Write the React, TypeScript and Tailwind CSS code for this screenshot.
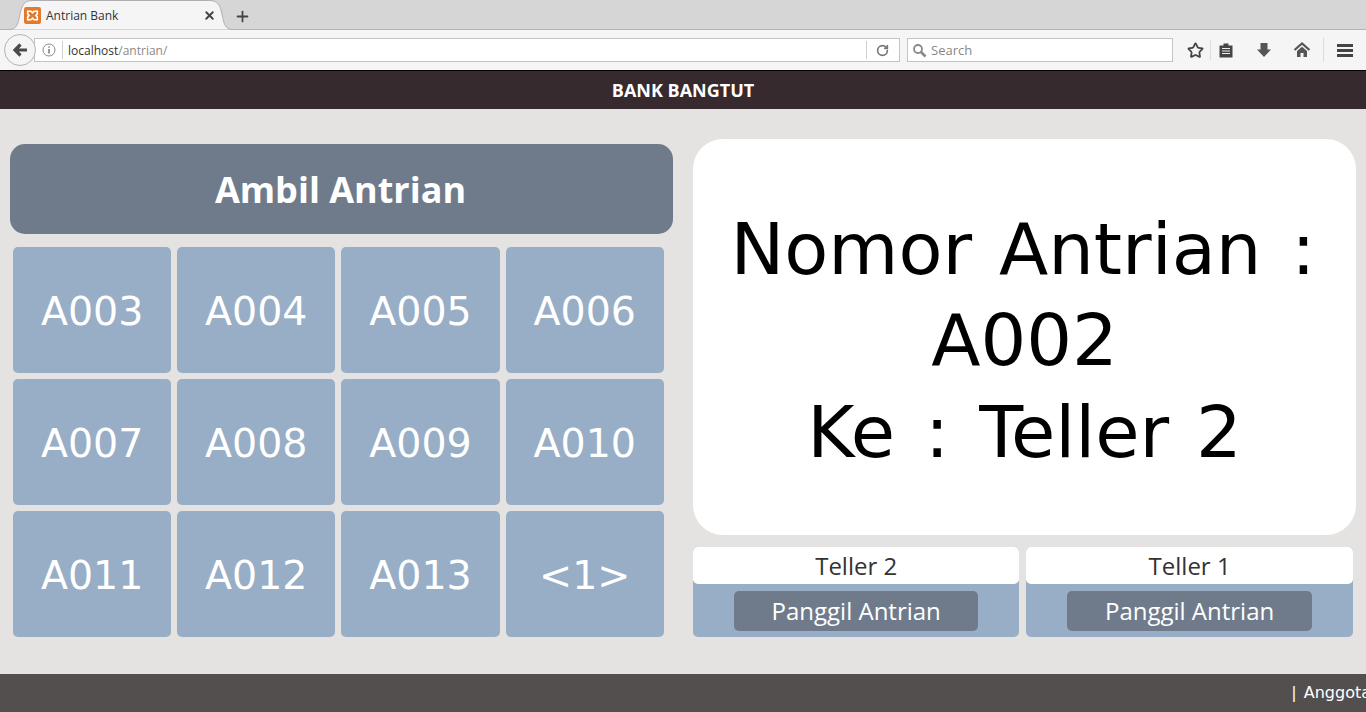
import { RotateCw, Star, X, Plus } from "lucide-react";

const tiles = ["A003", "A004", "A005", "A006", "A007", "A008", "A009", "A010", "A011", "A012", "A013", "<1>"];

const openSans = "font-['Open_Sans',sans-serif]";

function BrowserChrome() {
  return (
    <div className="h-[71px] shrink-0 border-b border-black bg-[#f5f5f5] font-['Open_Sans',sans-serif]">
      {/* Tabs */}
      <div className="relative flex h-[30px] items-end border-b border-[#b4b4b4] bg-[#d6d6d6]">
        <div className="relative -mb-px ml-[9px] flex h-[30px] w-[224px] items-center pl-[15px] pr-[17px]">
          <svg width="224" height="30" viewBox="0 0 224 30" className="absolute left-0 top-0">
            <path d="M0 29.500C8 29.500 9 24 11 14C13 5 15 .5 24 .5H200C209 .5 211 5 213 14C215 24 216 29.500 224 29.500Z" fill="#f5f5f5" />
            <path d="M0 29.500C8 29.500 9 24 11 14C13 5 15 .5 24 .5H200C209 .5 211 5 213 14C215 24 216 29.500 224 29.500" fill="none" stroke="#b0b0b0" />
          </svg>
          <svg width="17" height="17" viewBox="0 0 16 16" className="relative shrink-0">
            <rect width="16" height="16" rx="2" fill="#e27a2e" />
            <path d="M3.500 4h3L8 5.500 9.500 4h3v2.700L11.200 8l1.300 1.300V12h-3L8 10.500 6.500 12h-3V9.300L4.800 8 3.500 6.700z" fill="none" stroke="#fff" strokeWidth="1.500" />
          </svg>
          <span className="relative ml-[5px] flex-1 pt-[2px] text-[12px] leading-none text-[#333]">Antrian Bank</span>
          <X size={13} strokeWidth={3.5} className="relative text-[#444]" />
        </div>
        <Plus size={17} strokeWidth={2.500} className="mb-[4px] ml-[1px] text-[#444]" />
      </div>
      {/* Toolbar */}
      <div className="flex h-[40px] items-center pl-[4px]">
        <div className="relative z-10 flex h-[32px] w-[32px] shrink-0 items-center justify-center rounded-full border border-[#b4b4b4] bg-[#f5f5f5]">
          <svg width="16" height="16" viewBox="0 0 16 16">
            <path d="M8.500 2.500 3 8l5.500 5.500M3.500 8H15" fill="none" stroke="#4a4a4a" strokeWidth="3.200" />
          </svg>
        </div>
        <div className="-ml-[2px] flex h-[24px] w-[866px] shrink-0 items-center border border-[#c4c4c4] bg-white text-[12px]">
          <svg width="14" height="14" viewBox="0 0 14 14" className="ml-[7px] shrink-0">
            <circle cx="7" cy="7" r="6" fill="none" stroke="#888" />
            <path d="M7 6v4.500M7 3.500v1.300" stroke="#777" strokeWidth="1.500" />
          </svg>
          <span className="ml-[6px] h-[18px] border-l border-[#cfcfcf]" />
          <span className="ml-[5px] flex-1 pt-[1px] text-[#333]">
            localhost<span className="text-[#8a8a8a]">/antrian/</span>
          </span>
          <span className="h-[18px] border-l border-[#cfcfcf]" />
          <RotateCw size={13} strokeWidth={3} className="ml-[9px] mr-[10px] text-[#777]" />
        </div>
        <div className="ml-[7px] flex h-[24px] w-[266px] shrink-0 items-center border border-[#c4c4c4] bg-white text-[13px] text-[#888]">
          <svg width="15" height="15" viewBox="0 0 15 15" className="ml-[4px] shrink-0">
            <circle cx="6" cy="6" r="4" fill="none" stroke="#888" strokeWidth="1.800" />
            <path d="M9 9l4.500 4.500" stroke="#888" strokeWidth="2.600" />
          </svg>
          <span className="ml-[4px] pt-[1px]">Search</span>
        </div>
        <Star size={17} strokeWidth={2.500} className="ml-[14px] shrink-0 text-[#444]" />
        <span className="ml-[6px] h-[20px] border-l border-[#dcdcdc]" />
        <svg width="16" height="16" viewBox="0 0 16 16" className="ml-[7px] shrink-0">
          <path d="M1.500 3.500h4V1.500h5v2h4v12h-13z" fill="#444" />
          <path d="M4 6.500h8M4 9h8M4 11.500h8" stroke="#eee" strokeWidth="1.100" />
        </svg>
        <svg width="16" height="16" viewBox="0 0 16 16" className="ml-[22px] shrink-0">
          <path d="M4.500 1h7v6.500h3.500L8 15 1 7.500h3.500z" fill="#555" />
        </svg>
        <svg width="18" height="16" viewBox="0 0 18 16" className="ml-[21px] shrink-0">
          <path d="M1.500 8 9 1.500 16.500 8" fill="none" stroke="#555" strokeWidth="2.200" />
          <path d="M4 9 9 4.800 14 9v6h-3.500v-4h-3v4H4z" fill="#555" />
        </svg>
        <span className="ml-[12px] h-[24px] border-l border-[#dcdcdc]" />
        <div className="ml-[13px] flex w-[16px] shrink-0 flex-col gap-[2px]">
          <span className="h-[3px] bg-[#444]" />
          <span className="h-[3px] bg-[#444]" />
          <span className="h-[3px] bg-[#444]" />
        </div>
      </div>
    </div>
  );
}

function TellerCard({ name }: { name: string }) {
  return (
    <div className="flex h-[90px] flex-col rounded-[5px] bg-[#98adc6]">
      <div className={`flex h-[37px] items-center justify-center rounded-[5px] bg-white text-[24px] text-[#333] ${openSans}`}>{name}</div>
      <div className="flex flex-1 items-center justify-center">
        <div className={`flex h-[40px] w-[244.4px] items-center justify-center rounded-[5px] bg-[#6f7b8b] text-[24px] text-white ${openSans}`}>
          Panggil Antrian
        </div>
      </div>
    </div>
  );
}

export default function App() {
  return (
    <div className="flex h-[712px] flex-col overflow-hidden bg-[#e4e3e1]">
      <BrowserChrome />
      <header className={`flex h-[38px] shrink-0 items-center justify-center bg-[#362a2e] text-[18px] font-bold text-white ${openSans}`}>
        BANK BANGTUT
      </header>

      <main className="flex flex-1 items-start pl-[10px] pr-[10px] pt-[30px]">
        <section className="mt-[5px] w-[663px] shrink-0">
          <div className={`flex h-[90px] items-center justify-center rounded-[15px] bg-[#6f7b8b] pr-[2px] pt-[2px] text-[36px] font-bold text-white ${openSans}`}>
            Ambil Antrian
          </div>
          <div className="ml-[3px] mt-[13px] grid w-[650.8px] grid-cols-4 gap-[6px]">
            {tiles.map((t) => (
              <div key={t} className="flex h-[126px] items-center justify-center rounded-[5px] bg-[#98adc6] pt-[4px] font-['DejaVu_Sans',sans-serif] text-[39.5px] text-white">
                {t}
              </div>
            ))}
          </div>
        </section>

        <section className="ml-[20px] w-[663px] shrink-0">
          <div className="flex h-[396px] flex-col items-center justify-center rounded-[30px] bg-white pt-[8px] font-['DejaVu_Sans',sans-serif] text-[72px] leading-[91.5px] text-black [word-spacing:4px]">
            <div>
              Nomor Antrian <span className="mx-[3px]">:</span>
            </div>
            <div>A002</div>
            <div>
              Ke <span className="mx-[3px]">:</span> Teller 2
            </div>
          </div>
          <div className="mt-[12px] grid w-[659.8px] grid-cols-2 gap-[7px]">
            <TellerCard name="Teller 2" />
            <TellerCard name="Teller 1" />
          </div>
        </section>
      </main>

      <footer className="flex h-[38px] shrink-0 items-center justify-end overflow-hidden whitespace-nowrap bg-[#544f4f] font-['DejaVu_Sans',sans-serif] text-[16px] text-white [word-spacing:2px]">
        <span className="-mr-[5px]">| Anggota</span>
      </footer>
    </div>
  );
}
